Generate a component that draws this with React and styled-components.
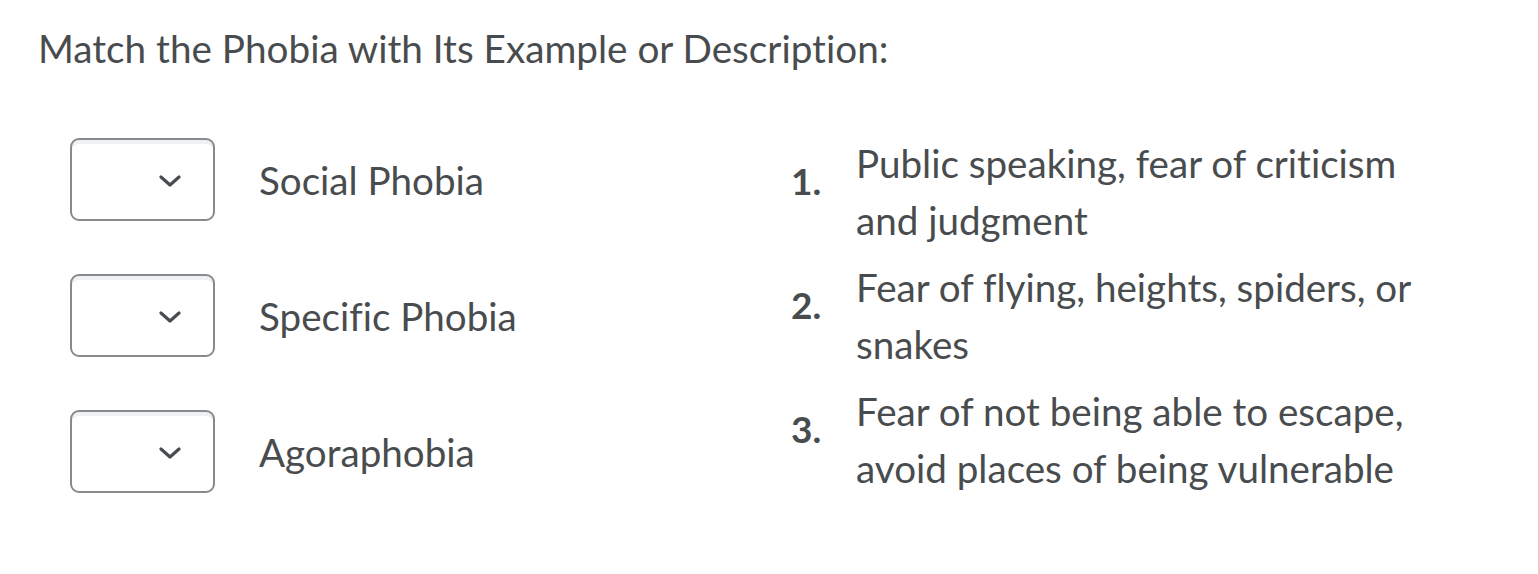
import React from "react";
import styled, { createGlobalStyle } from "styled-components";

const GlobalStyle = createGlobalStyle`
  html, body {
    margin: 0;
    padding: 0;
    background: #ffffff;
  }
  body {
    font-family: Lato, "Noto Sans", sans-serif;
    color: #494c4e;
    font-variant-ligatures: none;
  }
`;

const Page = styled.main`
  padding: 20px 0 0 38px;
`;

const Title = styled.h1`
  margin: 0;
  font-size: 38.7px;
  font-weight: 400;
  line-height: 56px;
  color: #494c4e;
`;

const Board = styled.div`
  display: grid;
  grid-template-columns: 721px 1fr;
  margin: 54px 0 0 32px;
`;

const ChoiceList = styled.div`
  display: flex;
  flex-direction: column;
  gap: 53px;
  padding-top: 8px;
`;

const ChoiceRow = styled.div`
  display: flex;
  align-items: center;
  gap: 44px;
`;

const Picker = styled.div`
  box-sizing: border-box;
  width: 145px;
  height: 83px;
  border: 2px solid #878b8d;
  border-radius: 9px;
  box-shadow: inset 0 4px 0 0 rgba(177, 185, 190, 0.2);
  display: flex;
  align-items: center;
  justify-content: flex-end;
  padding-right: 32px;
  padding-top: 3px;
  background: #fff;
`;

const ChoiceLabel = styled.span`
  font-size: 38.6px;
  line-height: 46px;
`;

const AnswerList = styled.ol`
  list-style: none;
  margin: 0;
  padding: 5px 0 0;
  display: flex;
  flex-direction: column;
  gap: 11px;
`;

const AnswerItem = styled.li`
  display: flex;
  align-items: center;
`;

const AnswerNumber = styled.span`
  width: 65px;
  flex: none;
  font-size: 37px;
  font-weight: 700;
  line-height: 44px;
  margin-top: -22px;
`;

const AnswerText = styled.span`
  width: 582px;
  font-size: 38.6px;
  line-height: 56.5px;
`;

const Chevron = () => (
  <svg width="22" height="12" viewBox="0 0 22 12" aria-hidden="true">
    <path
      d="M2 2 L11 10 L20 2"
      fill="none"
      stroke="#494c4e"
      strokeWidth="3.2"
      strokeLinecap="round"
      strokeLinejoin="round"
    />
  </svg>
);

const choices = ["Social Phobia", "Specific Phobia", "Agoraphobia"];

const answers = [
  "Public speaking, fear of criticism and judgment",
  "Fear of flying, heights, spiders, or snakes",
  "Fear of not being able to escape, avoid places of being vulnerable",
];

export default function App() {
  return (
    <>
      <GlobalStyle />
      <Page>
        <Title>Match the Phobia with Its Example or Description:</Title>
        <Board>
          <ChoiceList>
            {choices.map((c) => (
              <ChoiceRow key={c}>
                <Picker role="combobox" aria-label={c}>
                  <Chevron />
                </Picker>
                <ChoiceLabel>{c}</ChoiceLabel>
              </ChoiceRow>
            ))}
          </ChoiceList>
          <AnswerList>
            {answers.map((a, i) => (
              <AnswerItem key={a}>
                <AnswerNumber>{i + 1}.</AnswerNumber>
                <AnswerText>{a}</AnswerText>
              </AnswerItem>
            ))}
          </AnswerList>
        </Board>
      </Page>
    </>
  );
}
